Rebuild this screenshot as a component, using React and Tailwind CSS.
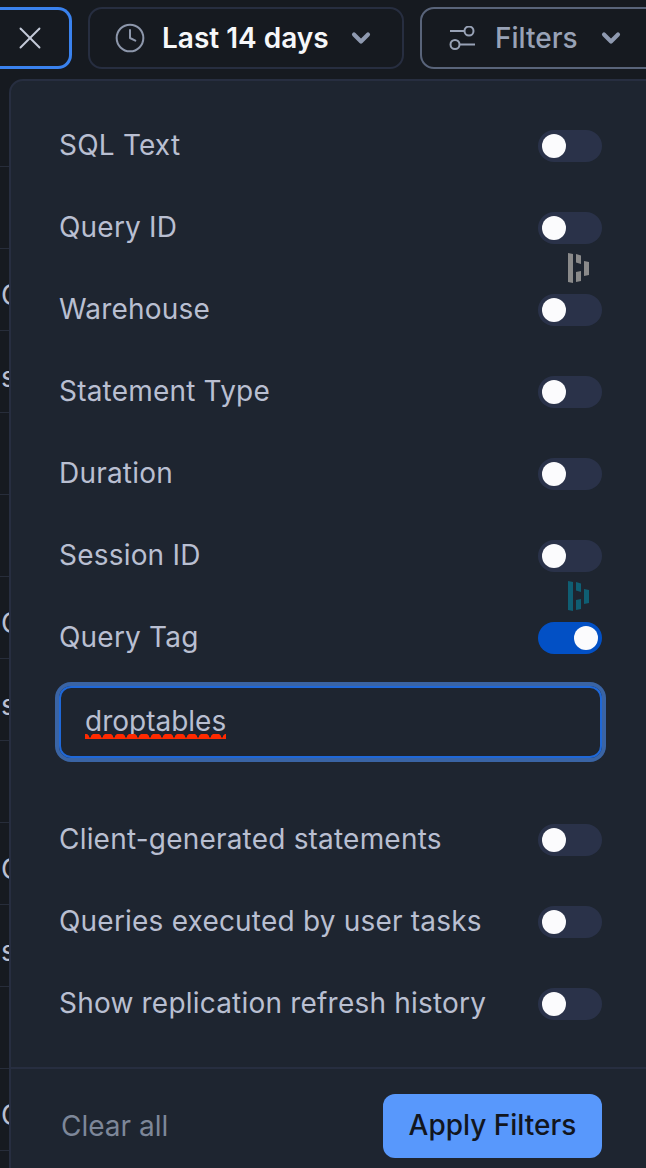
import { Clock, X, ChevronDown } from 'lucide-react';

const topFilters = ['SQL Text', 'Query ID', 'Warehouse', 'Statement Type', 'Duration', 'Session ID', 'Query Tag'];
const bottomFilters = ['Client-generated statements', 'Queries executed by user tasks', 'Show replication refresh history'];
const backRows = ['', '', 'C', 's', '', '', 'C', 's', '', 'C', 's', '', 'C', ''];

const Toggle = ({ on }) => (
    <div className={`w-16 h-8 rounded-full flex items-center px-1 shrink-0 ${on ? 'bg-[#0250c5] justify-end' : 'bg-[#2a3249] justify-start'}`}>
        <div className="w-6 h-6 rounded-full bg-[#fbfbfd]" />
    </div>
);

const FilterRow = ({ label, on }) => (
    <div className="h-[82px] flex items-center justify-between">
        <span className="text-[28px] leading-8 pb-[2px] tracking-[0.2px] text-[#b9bfd1]">{label}</span>
        <Toggle on={on} />
    </div>
);

const Mark = ({ className }) => (
    <svg className={className} width="22" height="30" viewBox="0 0 22 30" fill="currentColor">
        <path d="M0 0 L5 1 V30 L0 29 Z" />
        <path d="M8 1 L13 2.5 V11 L8 9.5 Z" />
        <path d="M8 19 L13 18 V28 L8 29 Z" />
        <path d="M16 8 L21 9 V22 L16 23 Z" />
    </svg>
);

const App = () => {
    return (
        <div className="relative w-[646px] h-[1168px] overflow-hidden bg-[#161a20]" style={{ fontFamily: 'Inter, "Liberation Sans", sans-serif' }}>
            <div className="flex gap-4 pt-[7px] h-[76px]">
                <div className="w-[72px] h-[62px] border-[3px] border-l-0 border-[#3a82ee] rounded-r-[14px] flex items-center justify-end pr-[20px] shrink-0">
                    <X size={38} strokeWidth={1.2} className="text-[#c4cad8]" />
                </div>
                <div className="w-[316px] h-[62px] border-2 border-[#272e40] rounded-[14px] flex items-center pl-[24px] shrink-0">
                    <Clock size={32} strokeWidth={1.5} className="text-[#8d97ab]" />
                    <span className="ml-4 text-[28px] font-semibold text-[#f6f7f9]">Last 14 days</span>
                    <ChevronDown size={28} strokeWidth={3.5} className="ml-[18px] text-[#8f9ab0]" />
                </div>
                <div className="w-[240px] h-[62px] border-2 border-[#59647a] rounded-[14px] flex items-center pl-[27px] shrink-0">
                    <svg width="28" height="24" viewBox="0 0 28 24" fill="none" stroke="#98a2b6" strokeWidth="2">
                        <path d="M1 5 H15" />
                        <circle cx="20" cy="5" r="4.5" />
                        <path d="M11 18.5 H26" />
                        <circle cx="6" cy="18.5" r="4.5" />
                    </svg>
                    <span className="ml-[18px] text-[28px] font-medium text-[#98a2b6]">Filters</span>
                    <ChevronDown size={28} strokeWidth={3.5} className="ml-[19px] text-[#8f9ab0]" />
                </div>
            </div>

            <div className="mt-[9px]">
                {backRows.map((t, i) => (
                    <div key={i} className="h-[82px] border-b border-[#272d3a] text-[28px] leading-8 text-[#b9bfd1] pl-[1px] pt-[30px]">{t}</div>
                ))}
            </div>

            <div className="absolute left-[9px] top-[79px] w-[660px] h-[1120px] bg-[#1e2530] border-2 border-[#272e40] rounded-[14px] pt-[24px]">
                <div className="pl-[48px] w-[591px]">
                    {topFilters.map(label => (
                        <FilterRow key={label} label={label} on={label === 'Query Tag'} />
                    ))}
                    <div className="mt-[7px] mb-[41px] h-[72px] border-2 border-[#1f68d8] rounded-[12px] ring-4 ring-[#3a64a4] flex items-center pl-[24px]">
                        <span className="relative text-[28px] leading-8 pb-[2px] text-[#b9bfd1]">
                            droptables
                            <span className="absolute left-0 right-0 top-[29px] h-[5px] bg-[radial-gradient(circle_at_6px_5px,#ff2a00_5.5px,transparent_6px)] bg-[length:12px_5px] bg-[position:5px_0]" />
                        </span>
                    </div>
                    {bottomFilters.map(label => (
                        <FilterRow key={label} label={label} />
                    ))}
                </div>
                <div className="mt-[22px] border-t-2 border-[#272e40] pt-[25px] pl-[50px]">
                    <div className="flex items-center justify-between w-[541px]">
                        <span className="text-[28px] text-[#7d8799]">Clear all</span>
                        <button className="w-[219px] h-[64px] rounded-[12px] pb-[2px] bg-[#5898fc] text-[28px] font-medium text-[#12161e]">Apply Filters</button>
                    </div>
                </div>
            </div>

            <Mark className="absolute left-[568px] top-[253px] text-[#8a8a8a]" />
            <Mark className="absolute left-[568px] top-[581px] text-[#0f5e73]" />
        </div>
    );
};

export default App;
